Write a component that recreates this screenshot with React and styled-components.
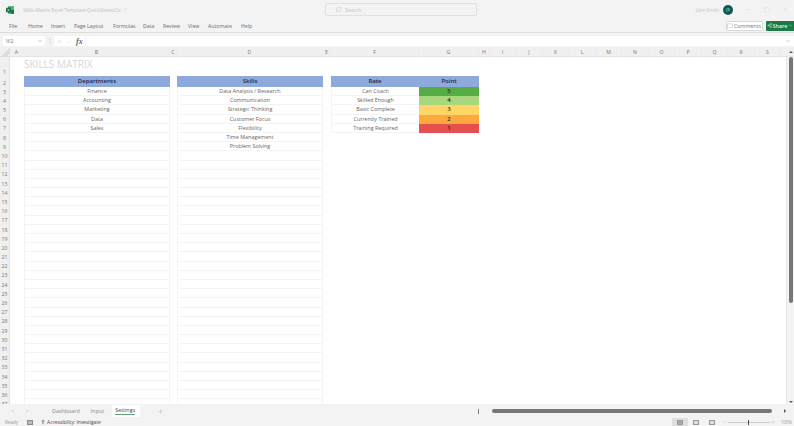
import React from 'react'
import styled, { createGlobalStyle } from 'styled-components'
import { ChevronDown, Search, X, Check, Minus, Square, MessageSquare, Plus, ChevronLeft, ChevronRight, Share2, PersonStanding } from 'lucide-react'

const GlobalStyle = createGlobalStyle`
  html, body, #root { margin: 0; padding: 0; width: 794px; height: 426px; overflow: hidden; }
  body { font-family: "Open Sans", "Noto Sans", sans-serif; background: #f3f3f3; }
`

const Window = styled.div`
  width: 794px;
  height: 426px;
  display: grid;
  grid-template-rows: 19px 14px 14px 10px 347px 14px 8px;
  background: #f3f3f3;
  color: #555;
`

const TitleBar = styled.header`
  display: flex;
  align-items: center;
  padding-left: 6px;
`

const TitleText = styled.div`
  display: flex;
  align-items: center;
  gap: 2px;
  width: 302px;
  margin-left: 9px;
  font-size: 4.8px;
  color: #c0c0c0;
`

const SearchBox = styled.div`
  width: 152px;
  height: 13px;
  box-sizing: border-box;
  border: 1px solid #e0e0e0;
  border-radius: 2px;
  display: flex;
  align-items: center;
  gap: 3px;
  padding-left: 9px;
  font-size: 5.2px;
  color: #c4c4c4;
`

const SearchIcon = styled(Search)`
  transform: scaleX(-1);
`

const UserArea = styled.div`
  margin-left: auto;
  display: flex;
  align-items: center;
  font-size: 4.6px;
  color: #c4c4c4;
`

const Avatar = styled.span`
  width: 10px;
  height: 10px;
  margin: 0 12px 0 4px;
  border-radius: 50%;
  background: #0e5c4f;
  color: #e8f2ef;
  font-size: 4px;
  display: flex;
  align-items: center;
  justify-content: center;
`

const WinButtons = styled.div`
  display: flex;
  align-items: center;
  gap: 12px;
  padding-right: 5px;
  color: #c8c8c8;
`

const MenuBar = styled.nav`
  display: flex;
  align-items: center;
  padding-left: 9px;
  border-bottom: 1px solid #dcdcdc;
  box-sizing: border-box;
  font-size: 5.2px;
  color: #6a6a6a;
`

const MenuItem = styled.span`
  width: ${p => p.$w}px;
  flex: none;
`

const Comments = styled.button`
  margin-left: auto;
  width: 37px;
  height: 10px;
  padding: 0;
  border: 1px solid #dadada;
  border-radius: 1px;
  background: #fff;
  font: inherit;
  font-size: 5.3px;
  color: #777;
  display: flex;
  align-items: center;
  justify-content: center;
  gap: 1px;
`

const Share = styled.button`
  margin-left: 3.5px;
  width: 28px;
  height: 10px;
  padding: 0;
  border: 0;
  border-radius: 1px 0 0 1px;
  background: #1c7a45;
  font: inherit;
  font-size: 5.4px;
  font-weight: 600;
  color: #e6f2ea;
  display: flex;
  align-items: center;
  justify-content: center;
  gap: 1px;
`

const FormulaBar = styled.div`
  display: flex;
  align-items: flex-start;
  padding: 3px 0 0 3px;
  box-sizing: border-box;
  color: #999;
`

const NameBox = styled.div`
  width: 42px;
  height: 10px;
  box-sizing: border-box;
  background: #fff;
  font-size: 5.2px;
  color: #777;
  display: flex;
  align-items: center;
  justify-content: space-between;
  padding: 0 2px 0 3px;
`

const Dots = styled.span`
  width: 9px;
  text-align: center;
  font-size: 6px;
  line-height: 10px;
  color: #aaa;
`

const FormulaTools = styled.div`
  width: 31px;
  height: 10px;
  background: #fff;
  display: flex;
  align-items: center;
  gap: 3px;
  padding-left: 2px;
  box-sizing: border-box;
  font: italic 600 8px "Liberation Serif", serif;
  color: #666;
`

const FormulaInput = styled.div`
  flex: 1;
  height: 10px;
  margin-left: 1px;
  background: #fff;
  display: flex;
  align-items: center;
  justify-content: flex-end;
  padding-right: 3px;
  color: #888;
`

const ColumnHeaders = styled.div`
  display: flex;
  align-items: center;
  background: #f0f0f0;
  box-shadow: inset 0 -1px 0 #e4e4e4;
`

const Corner = styled.div`
  width: 10px;
  height: 10px;
  flex: none;
  background: linear-gradient(135deg, transparent 55%, #dcdcdc 55%, #dcdcdc 85%, transparent 85%);
`

const ColumnLetter = styled.div`
  width: ${p => p.$w}px;
  flex: none;
  box-sizing: border-box;
  border-right: 1px solid #ececec;
  text-align: center;
  font-size: 5.2px;
  line-height: 9px;
  color: #777;
`

const SheetRow = styled.div`
  display: flex;
  min-height: 0;
  overflow: hidden;
`

const RowHeaders = styled.div`
  width: 10px;
  flex: none;
  background: #f0f0f0;
  border-right: 1px solid #e2e2e2;
  box-sizing: border-box;
  overflow: hidden;
`

const RowLabel = styled.div`
  height: ${p => p.$h}px;
  display: flex;
  align-items: flex-end;
  justify-content: center;
  padding-bottom: 0.5px;
  box-sizing: border-box;
  font-size: 5.2px;
  line-height: 7px;
  color: #777;
`

const Cells = styled.main`
  flex: 1;
  background: #fff;
  overflow: hidden;
  padding-left: 14px;
`

const SheetTitle = styled.h1`
  height: 19px;
  margin: 0;
  font-size: 10px;
  font-weight: 400;
  line-height: 14px;
  color: #d6d6d6;
`

const Tables = styled.div`
  display: flex;
  align-items: flex-start;
`

const Table = styled.section`
  width: ${p => p.$w}px;
  margin-right: ${p => p.$gap}px;
  flex: none;
`

const HeadRow = styled.div`
  display: flex;
  height: 11px;
  background: #8ea9db;
`

const HeadCell = styled.div`
  width: ${p => p.$w ? `${p.$w}px` : '100%'};
  text-align: center;
  font-size: 6px;
  font-weight: 600;
  line-height: 11px;
  color: #1d2a4a;
`

const BodyRow = styled.div`
  display: flex;
  height: 9.2px;
  box-sizing: border-box;
  border: 1px solid #f4f4f4;
  border-top: 0;
`

const BodyCell = styled.div`
  width: ${p => p.$w ? `${p.$w}px` : '100%'};
  text-align: center;
  font-size: 5.4px;
  line-height: 9px;
  color: #666;
`

const ScoreCell = styled.div`
  flex: 1;
  margin: 0 -1px -1px 0;
  background: ${p => p.$bg};
  text-align: center;
  font-size: 6px;
  font-weight: 600;
  line-height: 9px;
  color: #2b2b10;
`

const VScroll = styled.aside`
  width: 8px;
  flex: none;
  padding-left: 1px;
  box-sizing: border-box;
  border-left: 1px solid #e6e6e6;
  display: flex;
  flex-direction: column;
  align-items: center;
  background: #f3f3f3;
`

const VThumb = styled.div`
  width: 4px;
  height: 246px;
  border-radius: 2px;
  background: #777;
`

const Arrow = styled.span`
  width: 0;
  height: 0;
  flex: none;
  border-style: solid;
  border-color: transparent;
  border-width: 2px;
  ${p => p.$dir === 'up' && 'border-bottom-color: #555; border-top-width: 0;'}
  ${p => p.$dir === 'down' && 'border-top-color: #555; border-bottom-width: 0;'}
  ${p => p.$dir === 'right' && 'border-left-color: #555; border-right-width: 0;'}
`

const UpArrow = styled(Arrow)`
  margin: 0 1.5px 0 auto;
`

const DownArrow = styled(Arrow)`
  margin-top: auto;
  margin-bottom: 1px;
`

const TabBar = styled.div`
  display: flex;
  align-items: center;
  font-size: 5.4px;
  color: #888;
`

const TabNav = styled.div`
  width: 46.5px;
  flex: none;
  padding-left: 10px;
  box-sizing: border-box;
  display: flex;
  gap: 8px;
  color: #bbb;
`

const Tab = styled.div`
  height: 12px;
  padding: 0 5.5px;
  box-sizing: border-box;
  display: flex;
  align-items: center;
  ${p => p.$active && `
    margin-left: 2.5px;
    padding: 0 3px;
    width: 28px;
    background: #fff;
    color: #444;
  `}
`

const TabLabel = styled.span`
  line-height: 7px;
  border-bottom: 1px solid #5f9c78;
`

const AddTab = styled.div`
  margin-left: 16.5px;
  color: #999;
  display: flex;
`

const HScrollArea = styled.div`
  margin-left: auto;
  width: 316px;
  display: flex;
  align-items: center;
  padding-right: 8px;
  box-sizing: border-box;
`

const TabDivider = styled.span`
  width: 1px;
  height: 5px;
  margin-right: 13px;
  background: #777;
`

const HThumb = styled.div`
  flex: 1;
  height: 4px;
  margin-right: 12px;
  border-radius: 2px;
  background: #777;
`

const StatusBar = styled.footer`
  display: flex;
  align-items: center;
  padding-left: 5px;
  font-size: 4.6px;
  line-height: 8px;
  color: #999;
`

const Macro = styled.span`
  width: 6px;
  height: 5px;
  margin: 0 7px 0 9px;
  background: #bbb;
  box-shadow: inset 0 0 0 1px #8a8a8a;
`

const Accessibility = styled.span`
  color: #444;
  font-size: 4.8px;
  display: flex;
  align-items: center;
  gap: 1px;
`

const ViewArea = styled.div`
  margin-left: auto;
  display: flex;
  align-items: center;
  color: #999;
`

const ViewIcon = styled.span`
  width: 16px;
  height: 8px;
  display: flex;
  align-items: center;
  justify-content: center;
  background: ${p => (p.$active ? '#dfdfdf' : 'transparent')};
  &::before {
    content: '';
    width: 6px;
    height: 5px;
    box-sizing: border-box;
    border: 1px solid #999;
    background: ${p => (p.$active ? '#aaa' : '#ddd')};
  }
`

const ZoomGroup = styled.div`
  display: flex;
  align-items: center;
  gap: 1px;
  margin-left: 3px;
`

const ZoomTrack = styled.div`
  width: 42px;
  height: 1px;
  background: #ccc;
  position: relative;
`

const ZoomKnob = styled.span`
  position: absolute;
  left: 20px;
  top: -2px;
  width: 1.5px;
  height: 5px;
  background: #444;
`

const ZoomText = styled.span`
  margin: 0 2px 0 6px;
  font-size: 4.4px;
`

const columns = [
  ['A', 14], ['B', 146], ['C', 7], ['D', 146], ['E', 8], ['F', 88], ['G', 60], ['H', 11],
  ['I', 26], ['J', 27], ['K', 26], ['L', 27], ['M', 26], ['N', 27], ['O', 26], ['P', 27],
  ['Q', 26], ['R', 27], ['S', 26],
]

const departments = ['Finance', 'Accounting', 'Marketing', 'Data', 'Sales']
const skills = ['Data Analysis / Research', 'Communication', 'Strategic Thinking', 'Customer Focus', 'Flexibility', 'Time Management', 'Problem Solving']
const rates = [
  ['Can Coach', 5, '#56ad45'],
  ['Skilled Enough', 4, '#a9d77e'],
  ['Basic Complete', 3, '#ffd666'],
  ['Currently Trained', 2, '#ffa83e'],
  ['Training Required', 1, '#e5504f'],
]
// widths measured from one menu label to the next
const menus = [['File', 19], ['Home', 23], ['Insert', 23], ['Page Layout', 39], ['Formulas', 30], ['Data', 20], ['Review', 25], ['View', 20], ['Automate', 33], ['Help', 12]]

function ListTable({ title, items, gap }) {
  const rows = Array.from({ length: 36 }, (_, i) => items[i] || '\u00a0')
  return (
    <Table $w={146} $gap={gap}>
      <HeadRow><HeadCell>{title}</HeadCell></HeadRow>
      {rows.map((text, i) => (
        <BodyRow key={i}><BodyCell>{text}</BodyCell></BodyRow>
      ))}
    </Table>
  )
}

export default function App() {
  return (
    <Window>
      <GlobalStyle />
      <TitleBar>
        <svg width="8" height="8" viewBox="0 0 12 12">
          <rect x="3" y="0.5" width="9" height="11" rx="1" fill="#21a366" />
          <rect x="7.5" y="0.5" width="4.5" height="5.5" fill="#33c481" />
          <rect x="7.5" y="6" width="4.5" height="5.5" fill="#107c41" />
          <rect x="0" y="2.5" width="7" height="7" rx="0.7" fill="#185c37" />
          <path d="M2 4l3 4M5 4l-3 4" stroke="#fff" strokeWidth="0.9" />
        </svg>
        <TitleText>Skills-Matrix-Excel-Template-QuickSheetsCo <ChevronDown size={5} /></TitleText>
        <SearchBox><SearchIcon size={7} strokeWidth={1.5} />Search</SearchBox>
        <UserArea>
          John Smith
          <Avatar>JS</Avatar>
          <WinButtons>
            <Minus size={7} strokeWidth={1} />
            <Square size={6} strokeWidth={1} />
            <X size={7} strokeWidth={1} />
          </WinButtons>
        </UserArea>
      </TitleBar>

      <MenuBar>
        {menus.map(([name, w]) => <MenuItem key={name} $w={w}>{name}</MenuItem>)}
        <Comments><MessageSquare size={6} strokeWidth={1} />Comments</Comments>
        <Share><Share2 size={5} />Share<ChevronDown size={5} /></Share>
      </MenuBar>

      <FormulaBar>
        <NameBox>I62<ChevronDown size={6} strokeWidth={1.5} /></NameBox>
        <Dots>⋮</Dots>
        <FormulaTools>
          <X size={7} strokeWidth={1} color="#bbb" />
          <Check size={7} strokeWidth={1} color="#bbb" />
          fx
        </FormulaTools>
        <FormulaInput><ChevronDown size={6} strokeWidth={1.5} /></FormulaInput>
      </FormulaBar>

      <ColumnHeaders>
        <Corner />
        {columns.map(([name, w]) => <ColumnLetter key={name} $w={w}>{name}</ColumnLetter>)}
        <UpArrow $dir="up" />
      </ColumnHeaders>

      <SheetRow>
        <RowHeaders>
          <RowLabel $h={19}>1</RowLabel>
          <RowLabel $h={11}>2</RowLabel>
          {Array.from({ length: 35 }, (_, i) => (
            <RowLabel key={i} $h={9.2}>{i + 3}</RowLabel>
          ))}
        </RowHeaders>
        <Cells>
          <SheetTitle>SKILLS MATRIX</SheetTitle>
          <Tables>
            <ListTable title="Departments" items={departments} gap={7} />
            <ListTable title="Skills" items={skills} gap={8} />
            <Table $w={148} $gap={0}>
              <HeadRow>
                <HeadCell $w={88}>Rate</HeadCell>
                <HeadCell $w={60}>Point</HeadCell>
              </HeadRow>
              {rates.map(([label, point, bg]) => (
                <BodyRow key={label}>
                  <BodyCell $w={87}>{label}</BodyCell>
                  <ScoreCell $bg={bg}>{point}</ScoreCell>
                </BodyRow>
              ))}
            </Table>
          </Tables>
        </Cells>
        <VScroll>
          <VThumb />
          <DownArrow $dir="down" />
        </VScroll>
      </SheetRow>

      <TabBar>
        <TabNav><ChevronLeft size={6} /><ChevronRight size={6} /></TabNav>
        <Tab>Dashboard</Tab>
        <Tab>Input</Tab>
        <Tab $active><TabLabel>Settings</TabLabel></Tab>
        <AddTab><Plus size={7} strokeWidth={1} /></AddTab>
        <HScrollArea>
          <TabDivider />
          <HThumb />
          <Arrow $dir="right" />
        </HScrollArea>
      </TabBar>

      <StatusBar>
        Ready
        <Macro />
        <Accessibility><PersonStanding size={6} strokeWidth={1.5} />Accessibility: Investigate</Accessibility>
        <ViewArea>
          <ViewIcon $active />
          <ViewIcon />
          <ViewIcon />
          <ZoomGroup>
            <Minus size={4} strokeWidth={1.5} />
            <ZoomTrack><ZoomKnob /></ZoomTrack>
            <Plus size={4} strokeWidth={1.5} />
          </ZoomGroup>
          <ZoomText>100%</ZoomText>
        </ViewArea>
      </StatusBar>
    </Window>
  )
}
